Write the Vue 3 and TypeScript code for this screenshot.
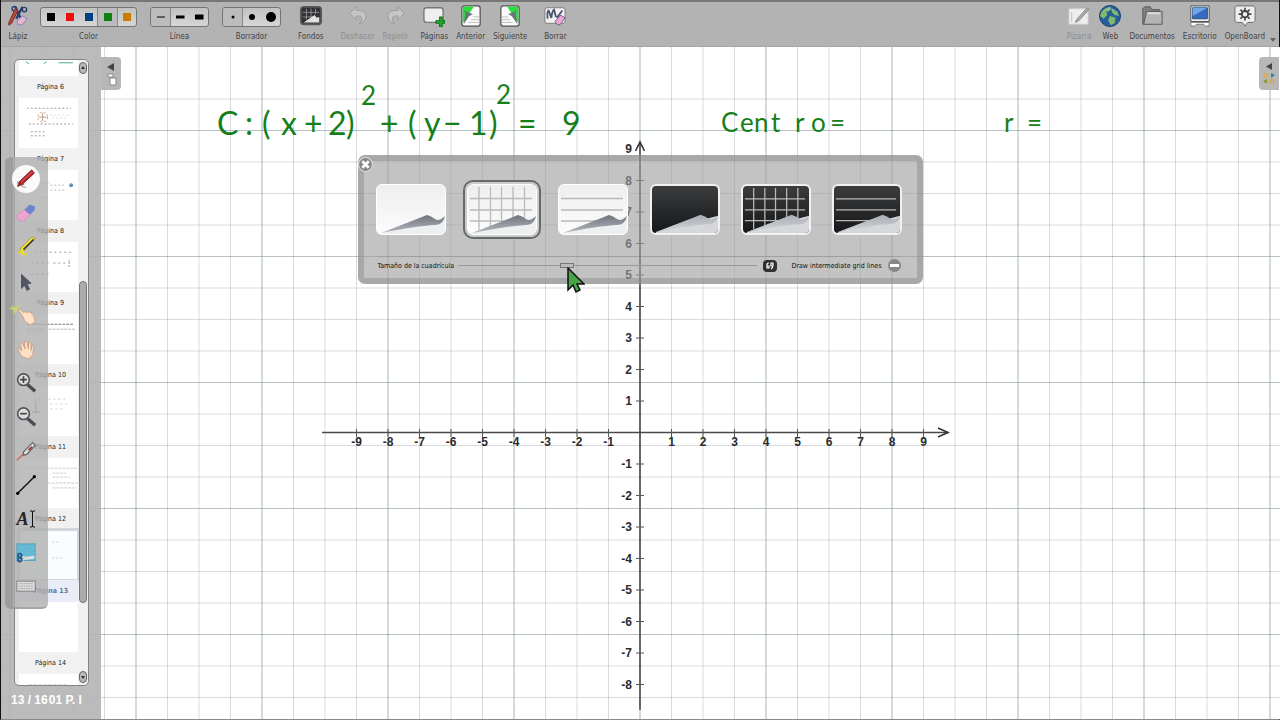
<script setup lang="ts">
import { ref } from 'vue'

const colors = ['#000000', '#f00c10', '#004080', '#108010', '#c87e00']
const activeColor = ref(3)
const activeLine = ref(0)
const activeEraser = ref(0)

const step = 31.5
const centerX = 640
const centerY = 432.5
const columns = Array.from({ length: 41 }, (_, i) => i - 20)
const rows = Array.from({ length: 23 }, (_, i) => i - 11)
const ticks = [-9, -8, -7, -6, -5, -4, -3, -2, -1, 1, 2, 3, 4, 5, 6, 7, 8, 9]
const yTicks = ticks.filter((n) => n > -9)

const pages = [6, 7, 8, 9, 10, 11, 12, 13, 14]
const currentPage = ref(13)

interface Background {
  name: string
  dark: boolean
  kind: 'plain' | 'grid' | 'ruled'
}
const backgrounds: Background[] = [
  { name: 'Claro liso', dark: false, kind: 'plain' },
  { name: 'Claro cuadriculado', dark: false, kind: 'grid' },
  { name: 'Claro rayado', dark: false, kind: 'ruled' },
  { name: 'Oscuro liso', dark: true, kind: 'plain' },
  { name: 'Oscuro cuadriculado', dark: true, kind: 'grid' },
  { name: 'Oscuro rayado', dark: true, kind: 'ruled' },
]
const activeBackground = ref(1)
const gridSize = ref(36)
const intermediate = ref(false)
</script>

<template>
  <div class="app">
    <header class="toolbar">
      <button class="tool">
        <svg viewBox="0 0 24 24"><path d="M9 2l6 13M17 2l-7 13" stroke="#233a6b" stroke-width="2.4" /><circle cx="8" cy="4" r="2.4" fill="none" stroke="#2c4170" stroke-width="1.6" /><circle cx="19" cy="5" r="2.4" fill="none" stroke="#2c4170" stroke-width="1.6" /><path d="M2 19L9 4l3 2-7 14-3 2z" fill="#b9453f" stroke="#7b2c28" /><path d="M11 17l6-5 5 3-5 6-5 1z" fill="#e7b6cf" stroke="#8380b8" /></svg>
        <span>Lápiz</span>
      </button>
      <div class="field first">
        <div class="segments" role="group" aria-label="Color">
          <button v-for="(color, i) in colors" :key="color" :class="{ on: activeColor === i }" :aria-label="'Color ' + (i + 1)" @click="activeColor = i">
            <svg viewBox="0 0 8 8" class="swatch"><rect width="8" height="8" :fill="color" /></svg>
          </button>
        </div>
        <span>Color</span>
      </div>
      <div class="field">
        <div class="segments" role="group" aria-label="Línea">
          <button v-for="i in 3" :key="i" :class="{ on: activeLine === i - 1 }" :aria-label="'Línea ' + i" @click="activeLine = i - 1">
            <svg viewBox="0 0 10 10"><rect v-if="i === 1" x="1" y="4.5" width="8" height="1" /><rect v-else-if="i === 2" x="1" y="3.5" width="8.5" height="3" /><rect v-else x="1" y="2.5" width="8.5" height="5" /></svg>
          </button>
        </div>
        <span>Línea</span>
      </div>
      <div class="field">
        <div class="segments" role="group" aria-label="Borrador">
          <button v-for="i in 3" :key="i" :class="{ on: activeEraser === i - 1 }" :aria-label="'Borrador ' + i" @click="activeEraser = i - 1">
            <svg viewBox="0 0 10 10"><circle cx="5" cy="5" :r="[1.5, 3, 5][i - 1]" /></svg>
          </button>
        </div>
        <span>Borrador</span>
      </div>
      <button class="tool apart">
        <svg viewBox="0 0 24 24"><rect x="1" y="2" width="22" height="19" rx="3" fill="#303235" stroke="#55585b" stroke-width="2" /><path d="M3 8h18M3 13h12M7 4v12M12 4v10M17 4v6" stroke="#929292" /><path d="M4 19L16 11l2 3 3-1v6z" fill="#e2e2e2" /></svg>
        <span>Fondos</span>
      </button>
      <button class="tool apart" disabled>
        <svg viewBox="0 0 24 24"><path d="M10 2L3 9l7 7v-4c7-1 8 4 3 9 11-4 11-16-3-15z" fill="#c5c5c5" stroke="#999" /></svg>
        <span>Deshacer</span>
      </button>
      <button class="tool" disabled>
        <svg viewBox="0 0 24 24"><path d="M14 2l7 7-7 7v-4c-7-1-8 4-3 9C0 17 0 5 14 6z" fill="#c5c5c5" stroke="#999" /></svg>
        <span>Repetir</span>
      </button>
      <button class="tool near">
        <svg viewBox="0 0 24 24"><rect x="1" y="3" width="21" height="16" rx="3" fill="#eee" stroke="#777" stroke-width="1.5" /><path d="M18 13h3v4h3v3h-3v4h-3v-4h-4v-3h4z" fill="#24a32b" stroke="#126d18" /></svg>
        <span>Páginas</span>
      </button>
      <button class="tool">
        <svg viewBox="0 0 24 24"><rect x="2" y="1" width="20" height="22" rx="2.5" fill="#fafafa" stroke="#555" stroke-width="1.4" /><path d="M3 2h12L3 20z" fill="#27df38" /><path d="M4 21L6 9l-2-3 10 4-4 2z" fill="#68737e" /><path d="M14 13h7M12 16h9M9 19h12" stroke="#bbb" /></svg>
        <span>Anterior</span>
      </button>
      <button class="tool">
        <svg viewBox="0 0 24 24"><rect x="2" y="1" width="20" height="22" rx="2.5" fill="#fafafa" stroke="#555" stroke-width="1.4" /><path d="M9 2h12v18z" fill="#27df38" /><path d="M20 21L18 9l2-3-10 4 4 2z" fill="#68737e" /><path d="M3 13h7M3 16h9M3 19h12" stroke="#bbb" /></svg>
        <span>Siguiente</span>
      </button>
      <button class="tool apart">
        <svg viewBox="0 0 24 24"><rect x="1" y="3" width="22" height="17" rx="2.5" fill="#f2f2f2" stroke="#777" /><path d="M4 15q-1-8 1-9l3 8q1-8 3-9l2 8M20 6l-6 8" fill="none" stroke="#4b566d" stroke-width="2" /><path d="M12 18l6-7 5 3-5 7-3 1z" fill="#eaa9d1" stroke="#69589c" /></svg>
        <span>Borrar</span>
      </button>
      <div class="grow"></div>
      <button class="tool" disabled>
        <svg viewBox="0 0 24 24"><rect x="1" y="4" width="21" height="17" rx="1" fill="#eee" stroke="#ccc" /><path d="M4 8v10" stroke="#bbb" /><path d="M8 19l2-4L21 3l2 2-11 12z" fill="#aaa" stroke="#888" /></svg>
        <span>Pizarra</span>
      </button>
      <button class="tool">
        <svg viewBox="0 0 24 24"><circle cx="12" cy="12" r="11.5" fill="#245f9c" stroke="#183d6d" /><path d="M3 7q5-5 10-5l-1 4-4 2 1 3-4 4-4-3zM14 4l6 3 2 5-5-1-3-3zM12 12l6 2-1 6-4 2-3-5z" fill="#83b76c" /><path d="M5 6q7-5 13 0-7-2-13 0" fill="#c0ddec" opacity=".5" /></svg>
        <span>Web</span>
      </button>
      <button class="tool">
        <svg viewBox="0 0 24 24"><path d="M2 21V4l2-2h6l2 3h8v15z" fill="#808080" stroke="#555" /><path d="M6 7h17v14H3z" fill="#b4b4b4" stroke="#555" /><path d="M7 9h14" stroke="#ddd" stroke-width="2" /></svg>
        <span>Documentos</span>
      </button>
      <button class="tool">
        <svg viewBox="0 0 24 24"><path d="M2 1h20v17H2z" fill="#eee" stroke="#4a4a4a" /><path d="M4 3h16v12H4z" fill="#366cc0" stroke="#244475" /><path d="M4 3h16L4 12z" fill="#75a5e6" /><path d="M2 23v-4h20v4h-4l-2-2H8l-2 2z" fill="#fff" stroke="#777" /></svg>
        <span>Escritorio</span>
      </button>
      <button class="tool">
        <svg viewBox="0 0 24 24"><path d="M3 1h18l2 2v14l-2 2h-6l-3 4-3-4H3l-2-2V3z" fill="#eee" stroke="#666" /><circle cx="12" cy="10" r="3.5" fill="none" stroke="#444" stroke-width="2" /><path d="M12 3v3M12 14v3M5 10h3M16 10h3M7 5l2 2M15 13l2 2M17 5l-2 2M9 13l-2 2" stroke="#444" stroke-width="1.8" /></svg>
        <span>OpenBoard</span>
      </button>
      <svg class="more" viewBox="0 0 6 4"><path d="M0 0h6L3 4z" fill="#666" /></svg>
    </header>

    <main class="stage">
      <svg class="board" viewBox="0 47 1280 672" preserveAspectRatio="xMidYMin slice" role="img" aria-label="Plano cartesiano">
        <g class="grid">
          <line v-for="n in columns" :key="'c' + n" :class="{ major: n % 4 === 0 }" :x1="centerX + n * step" :x2="centerX + n * step" y1="46" y2="720" />
          <line v-for="n in rows" :key="'r' + n" :class="{ majorRow: (n + 40) % 4 === 2 }" x1="0" x2="1280" :y1="445.5 + n * step" :y2="445.5 + n * step" />
        </g>
        <g class="axes">
          <path d="M322 432.500H948M640 710V142" class="axis" />
          <path d="M938 428l10 4.500-10 4.500M635.500 151l4.500-9 4.500 9" class="arrow" />
          <line v-for="n in ticks" :key="'tx' + n" :x1="centerX + n * step" :x2="centerX + n * step" y1="429" y2="437" />
          <line v-for="n in yTicks.filter((v) => v < 9)" :key="'ty' + n" x1="636" x2="644" :y1="centerY - n * step" :y2="centerY - n * step" />
        </g>
        <g class="numbers">
          <text v-for="n in ticks" :key="'nx' + n" :x="centerX + n * step" y="446" text-anchor="middle">{{ n }}</text>
          <text v-for="n in yTicks" :key="'ny' + n" x="632" :y="centerY - n * step + 4" text-anchor="end">{{ n }}</text>
        </g>
        <g class="ink">
          <text x="217 245 262 281 304 328 346" y="135">C:(x+2)</text>
          <text x="361" y="105" class="power">2</text>
          <text x="380 408 424 443 469 489" y="135">+(y−1)</text>
          <text x="496" y="104" class="power">2</text>
          <text x="518 562" y="135">=9</text>
          <text x="721 740 754 771 795 811 830" y="132" class="small">Centro=</text>
          <text x="1004 1027" y="132" class="small">r=</text>
        </g>
      </svg>

      <aside class="sidebar">
        <div class="pages">
          <ol>
            <li v-for="page in pages" :key="page">
              <button :class="{ current: page === currentPage }" @click="currentPage = page">
                <svg class="thumb" viewBox="0 0 60 50">
                  <g v-if="page === 6" stroke="#4aa894"><path d="M7 36l3 2M28 36l-3 2M40 37h15" /></g>
                  <g v-else-if="page === 7" fill="none" stroke="#999" stroke-dasharray="2 2"><path d="M8 10h45M10 26h45M12 34h16M12 38h14" /><circle cx="24" cy="19" r="5" stroke="#c99877" /><path d="M24 15v8M20 19h8" stroke="#b98" stroke-dasharray="none" /><path d="M32 17h20M34 20h16" stroke="#ddd" /></g>
                  <g v-else-if="page === 8" fill="none" stroke="#bbb" stroke-dasharray="2 2"><path d="M8 13h23M32 15h16M32 20h14M18 28h10" /><circle cx="53" cy="15" r="2" fill="#5992be" stroke="none" /></g>
                  <g v-else-if="page === 9" fill="none" stroke="#999" stroke-dasharray="2 3"><path d="M16 10h40M13 21h18M35 21h20M51 18v10M13 32h18" /></g>
                  <g v-else-if="page === 10" fill="none" stroke="#777" stroke-dasharray="3 1"><path d="M8 10h48" /><path d="M8 15h18M8 18h18M30 15h28" stroke="#bbb" /></g>
                  <g v-else-if="page === 11" fill="none" stroke="#ccc" stroke-dasharray="2 3"><path d="M10 13h40M32 18h18M32 23h15" /><path d="M17 15v12M13 26h8" stroke="#888" stroke-dasharray="none" /></g>
                  <g v-else-if="page === 12" fill="none" stroke="#ccc" stroke-dasharray="3 1"><path d="M8 10h52M34 15h14M34 19h18M25 25h35M34 30h25" /></g>
                  <g v-else-if="page === 13" fill="none" stroke="#ccc" stroke-dasharray="2 2"><path d="M34 12h8M34 28h12" /></g>
                </svg>
                <span>Página {{ page }}</span>
              </button>
            </li>
            <li class="partial"><svg class="thumb" viewBox="0 0 60 50"><path d="M10 11h40" stroke="#777" stroke-dasharray="3 2" /></svg></li>
          </ol>
          <div class="scroll">
            <svg viewBox="0 0 8 12"><rect x=".5" y=".5" width="7" height="11" rx="3.500" /><path d="M2 7l2-3 2 3z" class="mark" /></svg>
            <div class="handle"></div>
            <svg viewBox="0 0 8 12"><rect x=".5" y=".5" width="7" height="11" rx="3.500" /><path d="M2 5l2 3 2-3z" class="mark" /></svg>
          </div>
        </div>
        <div class="status"><span>13 / 16</span><span>01 P. I</span></div>
      </aside>

      <button class="tab left" aria-label="Páginas">
        <svg viewBox="0 0 12 24"><path d="M9 1v8L2 5z" fill="#444" /><path d="M3 12h5v3H3zM5 16h6v7H5z" fill="#fff" stroke="#888" /></svg>
      </button>
      <button class="tab right" aria-label="Biblioteca">
        <svg viewBox="0 0 12 24"><path d="M9 1v7L3 4.500z" fill="#444" /><path d="M1 12h4v3H1z" fill="none" stroke="#e8a627" /><path d="M8 11v5l4-3z" fill="#2684a8" /><path d="M0 19l4-2v5z" fill="#8b9a32" /><circle cx="9" cy="19.500" r="2" fill="none" stroke="#df9c2a" /></svg>
      </button>

      <nav class="palette" aria-label="Herramientas">
        <button class="active" aria-label="Lápiz"><svg viewBox="0 0 24 24"><path d="M2 15q-2 5 8 3-8 3 2 4" fill="none" stroke="#888" /><path d="M2 21l2-6L19 1l3 4L8 18z" fill="#b9252b" stroke="#701c20" /><path d="M6 16L20 3" stroke="#e96f6f" /></svg></button>
        <button aria-label="Borrador"><svg viewBox="0 0 24 24"><path d="M1 15l9-7 7 6-8 8-7-2z" fill="#eca5d1" stroke="#d78fbc" /><path d="M10 8l6-6 7 2-1 5-5 5z" fill="#7085cf" /></svg></button>
        <button aria-label="Marcador"><svg viewBox="0 0 24 24"><path d="M4 18l2-5L19 0l4 2L9 17z" fill="#f3e342" stroke="#a3972a" /><path d="M9 15L21 3" stroke="#333" stroke-width="2" /><path d="M2 19q9-3 6 0t5 1" fill="none" stroke="#eade31" stroke-width="2" /></svg></button>
        <button aria-label="Seleccionar"><svg viewBox="0 0 24 24"><path d="M6 3l13 12-5 1 3 6-4 2-3-6-4 4z" fill="#515762" /></svg></button>
        <button aria-label="Interactuar"><svg viewBox="0 0 24 24"><path d="M-6 0l5 3 5-4-2 5 5 3-6 0-3 4-1-5-6-2 5-1z" fill="#c7d271" /><path d="M5 5q-3-1-2 1l6 9 1 4 7 5 6-4-2-8-5-4-3 1-2-1-2 1z" fill="#fee0c7" stroke="#c69b7f" /></svg></button>
        <button aria-label="Mover"><svg viewBox="0 0 24 24"><path d="M7 21L2 12q2-2 5 2L5 5q2-1 3 1l3 6-1-9 3 0 2 9 0-8q2-1 3 2l0 8 1-6q2-1 2 2l-1 9-5 5z" fill="#fee0c7" stroke="#c69b7f" /></svg></button>
        <button aria-label="Acercar"><svg viewBox="0 0 24 24"><path d="M14 14l9 8" stroke="#484b50" stroke-width="4" /><circle cx="9" cy="8" r="7" fill="#ddd" stroke="#51555a" stroke-width="2" /><path d="M5 8h8M9 4v8" stroke="#444" stroke-width="2" /></svg></button>
        <button aria-label="Alejar"><svg viewBox="0 0 24 24"><path d="M14 14l9 8" stroke="#484b50" stroke-width="4" /><circle cx="9" cy="8" r="7" fill="#ddd" stroke="#51555a" stroke-width="2" /><path d="M5 8h8" stroke="#444" stroke-width="2" /></svg></button>
        <button aria-label="Puntero láser"><svg viewBox="0 0 24 24"><path d="M1 23l10-9" stroke="#d46f72" stroke-width="2" /><path d="M9 13L20 2l3 3-10 11-4 1z" fill="#ddd" stroke="#666" stroke-width="1.500" /><path d="M15 11l4-4" stroke="#a33" stroke-width="2" /></svg></button>
        <button aria-label="Línea"><svg viewBox="0 0 24 24"><path d="M2 22L22 2" stroke="#161616" stroke-width="1.800" /><circle cx="2" cy="22" r="2" /><circle cx="22" cy="2" r="2" /></svg></button>
        <button class="letter" aria-label="Texto"><i>A</i><svg viewBox="0 0 5 18"><path d="M0 1h2l.5 1L3 1h2M2.500 2v14M0 17h2l.5-1 .5 1h2" fill="none" stroke="#111" /></svg></button>
        <button aria-label="Capturar"><svg viewBox="0 0 24 24"><path d="M1 1h22v20H1z" fill="#66b9d2" stroke="#2b8eb2" stroke-dasharray="2 1" /><path d="M7 17l15 1-15 2M8 19l14-3" stroke="#ddd" stroke-width="2" /><circle cx="4.500" cy="15" r="2.300" fill="none" stroke="#235a88" stroke-width="2" /><circle cx="4.500" cy="20" r="2.300" fill="none" stroke="#235a88" stroke-width="2" /></svg></button>
        <button aria-label="Teclado"><svg viewBox="0 0 24 24"><rect x="1" y="5" width="22" height="12" fill="#ddd" stroke="#777" /><path d="M3 8h18M3 11h18M3 14h18" stroke="#999" stroke-dasharray="2 1" /></svg></button>
      </nav>

      <section class="backgrounds" aria-label="Fondos">
        <button class="close" aria-label="Cerrar"><svg viewBox="0 0 14 14"><circle cx="7" cy="7" r="6.500" fill="#888" stroke="#ddd" /><path d="M4 4l6 6M10 4l-6 6" stroke="#fff" stroke-width="2.500" /></svg></button>
        <div class="cards">
          <button v-for="(bg, i) in backgrounds" :key="bg.name" :aria-label="bg.name" :class="['card', { dark: bg.dark, chosen: activeBackground === i }]" @click="activeBackground = i">
            <svg viewBox="0 0 68 49" preserveAspectRatio="none">
              <defs><linearGradient :id="'curl' + i" x1="0" y1="0" x2="0" y2="1"><stop offset="0" :stop-color="bg.dark ? '#a9adb5' : '#6f747d'" /><stop offset="1" :stop-color="bg.dark ? '#d3d5d9' : '#b4b8bf'" /></linearGradient></defs>
              <path v-if="bg.kind === 'grid'" class="pattern" d="M2 13.500h62M2 25h62M2 36h62M11 2v43M22.500 2v41M33.500 2v36M45 2v33M56.500 2v32" />
              <path v-if="bg.kind === 'ruled'" class="pattern" d="M2 13.500h62M2 25h62M2 36h38" />
              <path d="M4 48L50 36 68 31V49H4z" :fill="bg.dark ? '#d6d7db' : '#eeeff1'" />
              <path d="M4 48L45 32 50 30Q54 31 58 34q4 3 10-3-2 9-10 9-19 1-54 8z" :fill="'url(#curl' + i + ')'" />
            </svg>
          </button>
        </div>
        <div class="settings">
          <label for="size">Tamaño de la cuadrícula</label>
          <input id="size" v-model="gridSize" type="range" min="0" max="100" />
          <button class="reset" aria-label="Restablecer"><svg viewBox="0 0 14 12"><rect width="14" height="12" rx="4" fill="#303030" /><path d="M6 3Q4 3 4 5v3h2V6H4M8 9q2-1 2-4V3H8v3h2" fill="none" stroke="#fff" stroke-width="1.200" /></svg></button>
          <label for="between">Draw intermediate grid lines</label>
          <input id="between" v-model="intermediate" type="checkbox" />
        </div>
        <svg class="cursor" viewBox="0 0 18 27"><path d="M1 1v22l5-5 3 7 4-2-3-6h7z" fill="#46a449" stroke="#111" stroke-width="1.500" /></svg>
      </section>
    </main>
  </div>
</template>

<style>
body { margin: 0; overflow: hidden; }
</style>

<style scoped>
* { box-sizing: border-box; }
button { padding: 0; border: 0; background: none; font: inherit; color: inherit; display: flex; align-items: center; justify-content: center; }
svg { display: block; flex: none; }
.app { height: 100vh; display: flex; flex-direction: column; font-family: "DejaVu Sans Condensed", "DejaVu Sans", sans-serif; font-size: 8px; color: #444; border-left: 1px solid #111; border-right: 1px solid #111; border-bottom: 1px solid #888; }
.toolbar { height: 47px; flex: none; display: flex; align-items: flex-start; gap: 8px; padding: 3px 3px 0 6px; background: #b3b3b3; border-top: 2px solid #777; border-bottom: 1px solid #a5a5a5; }
.tool { flex-direction: column; gap: 5px; line-height: 10px; white-space: nowrap; }
.tool svg { width: 22px; height: 22px; }
.tool:disabled { color: #8e8e8e; }
.apart { margin-left: 9px; }
.near { margin-left: 4px; }
.field { display: flex; flex-direction: column; align-items: center; gap: 5px; margin-left: 5px; line-height: 10px; }
.field.first { margin-left: 3px; }
.segments { display: flex; height: 20px; margin-top: 2px; border: 1px solid #747474; border-radius: 3px; background: linear-gradient(#c2c2c2, #d6d6d6); overflow: hidden; }
.segments button { width: 19px; }
.segments .on { background: #bcbcbc; box-shadow: 0 0 0 1px #888; }
.segments svg { width: 10px; height: 10px; }
.segments .swatch { width: 8px; height: 8px; }
.grow { flex: 1; }
.more { width: 6px; height: 4px; align-self: flex-end; margin-left: -3px; margin-bottom: 4px; }
.stage { position: relative; flex: 1; min-height: 0; overflow: hidden; background: #fff; margin: 0 -1px; }
.board { position: absolute; inset: 0; width: 100%; height: 100%; }
.grid line { stroke: #8c949a; stroke-opacity: .34; stroke-width: 1; }
.grid .major { stroke: #82919f; stroke-opacity: .34; stroke-width: 2; }
.grid .majorRow { stroke: #71838e; stroke-opacity: .5; }
.axes line { stroke: #555; stroke-width: 1; }
.axis { stroke: #4a4a4a; stroke-width: 1.6; fill: none; }
.arrow { stroke: #333; stroke-width: 1.6; fill: none; }
.numbers { font: bold 12px "Liberation Sans", Arial, sans-serif; fill: #2b2b2b; }
.ink { font: 32px Lato, sans-serif; fill: #15801a; }
.ink .power { font-size: 26px; }
.ink .small { font-size: 26px; }
.sidebar { position: absolute; left: 0; top: 0; bottom: 0; width: 101px; padding: 12px 12px 0 13px; display: flex; flex-direction: column; background: rgba(178, 178, 178, .88); border-left: 1px solid #111; }
.pages { flex: 1; min-height: 0; display: flex; border: 1px solid #858585; border-radius: 5px; background: #f1f1f2; overflow: hidden; }
.pages ol { flex: 1; list-style: none; margin: -34px 0 0; padding: 0 0 0 4px; }
.pages li { height: 72px; }
.pages .partial { height: 50px; }
.pages li button { flex-direction: column; width: 100%; height: 72px; font-size: 7px; color: #222; }
.thumb { width: 100%; height: 50px; background: #fff; }
.pages span { flex: 1; display: flex; align-items: center; width: 100%; justify-content: center; padding-left: 4px; }
.pages .current .thumb { background: #fafcff; outline: 3px solid #d3d7dd; outline-offset: -1px; }
.pages .current span { background: #e8edf8; color: #6675a5; font-weight: bold; }
.scroll { width: 10px; display: flex; flex-direction: column; align-items: center; }
.scroll svg { width: 8px; height: 12px; margin: 2px 0; }
.scroll rect { fill: #b8b8b8; stroke: #666; }
.scroll .mark { fill: #333; }
.handle { flex: 0 0 322px; width: 8px; margin-top: auto; margin-bottom: 66px; border: 1px solid #777; border-radius: 4px; background: #acacac; }
.status { height: 33px; flex: none; display: flex; align-items: center; gap: 1px; white-space: nowrap; margin: 0 0 0 -3px; padding-bottom: 6px; color: #fff; font: bold 12px "Liberation Sans", Arial, sans-serif; }
.status span { flex: none; }
.tab { position: absolute; top: 10px; width: 20px; height: 33px; background: #b7b7b7; }
.tab svg { width: 12px; height: 24px; }
.tab.left { left: 101px; border-radius: 0 4px 4px 0; }
.tab.right { right: 1px; border-radius: 4px 0 0 4px; }
.palette { position: absolute; left: 5px; top: 110px; width: 43px; padding: 5px 10px 3px 0; display: flex; flex-direction: column; align-items: center; background: rgba(173, 173, 173, .78); border: solid rgba(140, 140, 140, .5); border-width: 0 0 2px 8px; border-radius: 6px; }
.palette button { width: 28px; height: 34px; }
.palette svg { width: 20px; height: 20px; overflow: visible; }
.palette .active { height: 28px; margin-top: 3px; margin-bottom: 3px; background: #fafafa; border-radius: 50%; }
.palette .letter { gap: 1px; font: bold 18px "Liberation Serif", serif; color: #222; }
.palette .letter svg { width: 5px; height: 18px; }
.backgrounds { position: absolute; top: 108px; left: 0; right: 0; margin: 0 auto; width: 565px; height: 129px; padding: 19px 14px 0 12px; border: 6px solid rgba(130, 130, 130, .4); border-radius: 7px; background: rgba(158, 158, 158, .62); }
.close { position: absolute; left: -6px; top: -5px; width: 16px; height: 16px; }
.close svg { width: 15px; height: 15px; }
.cards { display: flex; justify-content: space-between; padding-bottom: 21px; }
.card { width: 70px; height: 51px; margin-top: 4px; border: 1px solid #fff; border-radius: 6px; background: linear-gradient(#eee, #fcfcfc); overflow: hidden; }
.card.dark { border-width: 2px; border-color: #f1f1f1; background: linear-gradient(#3b3c3d, #161718); }
.card svg { width: 100%; height: 100%; }
.card.chosen { box-shadow: 0 0 0 2px #ccc, 0 0 0 4px #656a6a; }
.pattern { fill: none; stroke: #bcb9b7; stroke-width: 1.3; }
.settings { display: flex; align-items: center; height: 18px; margin: 0 2px; font-size: 7px; color: #111; border-top: 1px solid rgba(120, 120, 120, .25); }
.settings input { appearance: none; margin: 0; background: none; }
.settings input[type="range"] { flex: 1; height: 12px; margin-left: 4px; margin-right: 6px; background: linear-gradient(#999, #999) center / 100% 1px no-repeat; }
.settings input::-webkit-slider-thumb { appearance: none; width: 14px; height: 5px; border: 1px solid #777; background: #bbb; }
.reset { margin-right: 15px; }
.reset svg { width: 14px; height: 12px; }
.settings input[type="checkbox"] { width: 13px; height: 13px; margin-left: 6px; border-radius: 50%; background: linear-gradient(#fff, #fff) center / 9px 3px no-repeat #888; }
.cursor { position: absolute; left: 203px; top: 106px; width: 18px; height: 27px; }
</style>
